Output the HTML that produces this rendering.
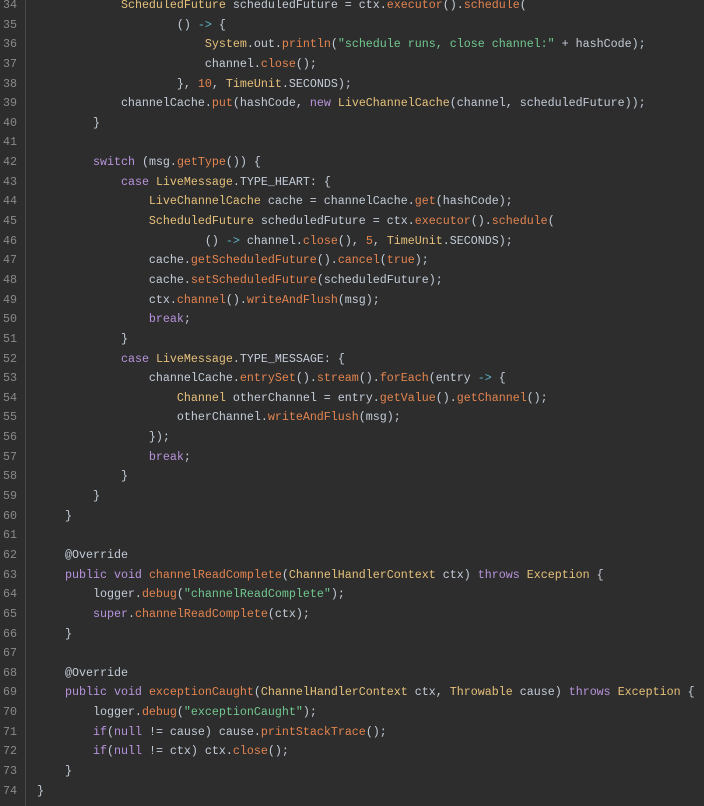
<!DOCTYPE html>
<html><head><meta charset="utf-8"><style>
html,body{margin:0;padding:0;background:#2d2d2d;width:704px;height:806px;overflow:hidden}
.w{position:absolute;top:-4px;left:0;width:704px}
.g{position:absolute;left:25px;top:0;width:1px;height:806px;background:#4a4a4a}
.l{height:19.65px;line-height:19.65px;font-family:"Liberation Mono",monospace;font-size:11.67px;color:#c3ccd8;white-space:pre;position:relative}
.l b{font-weight:normal;position:absolute;left:0;width:17px;text-align:right;color:#8a8a8a}
.l i{font-style:normal;position:absolute;left:37px}
.k{color:#b894dd}.t{color:#e6c07b}.m{color:#e3844f}.s{color:#72c78f}.n{color:#e3844f}.c{color:#5fb8c6}
</style></head><body>
<div class="g"></div>
<div class="w">
<div class="l"><b>34</b><i>            <span class="t">ScheduledFuture</span> scheduledFuture = ctx.<span class="m">executor</span>().<span class="m">schedule</span>(</i></div>
<div class="l"><b>35</b><i>                    () <span class="c">-&gt;</span> {</i></div>
<div class="l"><b>36</b><i>                        <span class="t">System</span>.out.<span class="m">println</span>(<span class="s">"schedule runs, close channel:"</span> + hashCode);</i></div>
<div class="l"><b>37</b><i>                        channel.<span class="m">close</span>();</i></div>
<div class="l"><b>38</b><i>                    }, <span class="n">10</span>, <span class="t">TimeUnit</span>.SECONDS);</i></div>
<div class="l"><b>39</b><i>            channelCache.<span class="m">put</span>(hashCode, <span class="k">new</span> <span class="t">LiveChannelCache</span>(channel, scheduledFuture));</i></div>
<div class="l"><b>40</b><i>        }</i></div>
<div class="l"><b>41</b><i></i></div>
<div class="l"><b>42</b><i>        <span class="k">switch</span> (msg.<span class="m">getType</span>()) {</i></div>
<div class="l"><b>43</b><i>            <span class="k">case</span> <span class="t">LiveMessage</span>.TYPE_HEART: {</i></div>
<div class="l"><b>44</b><i>                <span class="t">LiveChannelCache</span> cache = channelCache.<span class="m">get</span>(hashCode);</i></div>
<div class="l"><b>45</b><i>                <span class="t">ScheduledFuture</span> scheduledFuture = ctx.<span class="m">executor</span>().<span class="m">schedule</span>(</i></div>
<div class="l"><b>46</b><i>                        () <span class="c">-&gt;</span> channel.<span class="m">close</span>(), <span class="n">5</span>, <span class="t">TimeUnit</span>.SECONDS);</i></div>
<div class="l"><b>47</b><i>                cache.<span class="m">getScheduledFuture</span>().<span class="m">cancel</span>(<span class="n">true</span>);</i></div>
<div class="l"><b>48</b><i>                cache.<span class="m">setScheduledFuture</span>(scheduledFuture);</i></div>
<div class="l"><b>49</b><i>                ctx.<span class="m">channel</span>().<span class="m">writeAndFlush</span>(msg);</i></div>
<div class="l"><b>50</b><i>                <span class="k">break</span>;</i></div>
<div class="l"><b>51</b><i>            }</i></div>
<div class="l"><b>52</b><i>            <span class="k">case</span> <span class="t">LiveMessage</span>.TYPE_MESSAGE: {</i></div>
<div class="l"><b>53</b><i>                channelCache.<span class="m">entrySet</span>().<span class="m">stream</span>().<span class="m">forEach</span>(entry <span class="c">-&gt;</span> {</i></div>
<div class="l"><b>54</b><i>                    <span class="t">Channel</span> otherChannel = entry.<span class="m">getValue</span>().<span class="m">getChannel</span>();</i></div>
<div class="l"><b>55</b><i>                    otherChannel.<span class="m">writeAndFlush</span>(msg);</i></div>
<div class="l"><b>56</b><i>                });</i></div>
<div class="l"><b>57</b><i>                <span class="k">break</span>;</i></div>
<div class="l"><b>58</b><i>            }</i></div>
<div class="l"><b>59</b><i>        }</i></div>
<div class="l"><b>60</b><i>    }</i></div>
<div class="l"><b>61</b><i></i></div>
<div class="l"><b>62</b><i>    @Override</i></div>
<div class="l"><b>63</b><i>    <span class="k">public void</span> <span class="m">channelReadComplete</span>(<span class="t">ChannelHandlerContext</span> ctx) <span class="k">throws</span> <span class="t">Exception</span> {</i></div>
<div class="l"><b>64</b><i>        logger.<span class="m">debug</span>(<span class="s">"channelReadComplete"</span>);</i></div>
<div class="l"><b>65</b><i>        <span class="k">super</span>.<span class="m">channelReadComplete</span>(ctx);</i></div>
<div class="l"><b>66</b><i>    }</i></div>
<div class="l"><b>67</b><i></i></div>
<div class="l"><b>68</b><i>    @Override</i></div>
<div class="l"><b>69</b><i>    <span class="k">public void</span> <span class="m">exceptionCaught</span>(<span class="t">ChannelHandlerContext</span> ctx, <span class="t">Throwable</span> cause) <span class="k">throws</span> <span class="t">Exception</span> {</i></div>
<div class="l"><b>70</b><i>        logger.<span class="m">debug</span>(<span class="s">"exceptionCaught"</span>);</i></div>
<div class="l"><b>71</b><i>        <span class="k">if</span>(<span class="k">null</span> != cause) cause.<span class="m">printStackTrace</span>();</i></div>
<div class="l"><b>72</b><i>        <span class="k">if</span>(<span class="k">null</span> != ctx) ctx.<span class="m">close</span>();</i></div>
<div class="l"><b>73</b><i>    }</i></div>
<div class="l"><b>74</b><i>}</i></div>
</div>
</body></html>
